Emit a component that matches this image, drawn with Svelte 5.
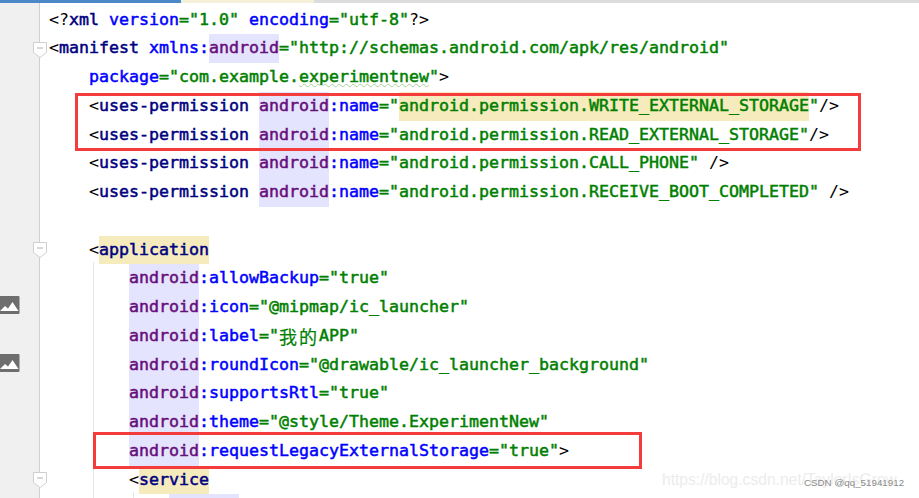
<script>
  const t = (c, s) => ({ c, s });
  const ns = t('ns hl', 'android');
  const perm = (name, tail) => [
    t('br', '<'), t('tag', 'uses-permission'), t('', ' '), ns, t('attr', ':name'), t('val', '='),
    ...name, t('br', tail)
  ];
  const attr = (name, value, tail = '') => [
    ns, t('attr', ':' + name), t('val', '="' + value + '"'), t('br', tail)
  ];

  const lines = [
    { indent: 0, tokens: [t('br', '<?'), t('tag', 'xml'), t('', ' '), t('attr', 'version'), t('val', '="1.0"'), t('', ' '), t('attr', 'encoding'), t('val', '="utf-8"'), t('br', '?>')] },
    { indent: 0, tokens: [t('br', '<'), t('tag', 'manifest'), t('', ' '), t('attr', 'xmlns:'), ns, t('val', '="http://schemas.android.com/apk/res/android"')] },
    { indent: 4, tokens: [t('attr', 'package'), t('val', '="com.example.'), t('val wavy', 'experimentnew'), t('val', '"'), t('br', '>')] },
    { indent: 4, tokens: perm([t('val', '"'), t('val hl2', 'android.permission.WRITE_EXTERNAL_STORAGE'), t('val', '"')], '/>') },
    { indent: 4, tokens: perm([t('val', '"android.permission.READ_EXTERNAL_STORAGE"')], '/>') },
    { indent: 4, tokens: perm([t('val', '"android.permission.CALL_PHONE"')], ' />') },
    { indent: 4, tokens: perm([t('val', '"android.permission.RECEIVE_BOOT_COMPLETED"')], ' />') },
    { indent: 0, tokens: [] },
    { indent: 4, tokens: [t('br', '<'), t('tag hl2', 'application')] },
    { indent: 8, tokens: attr('allowBackup', 'true') },
    { indent: 8, tokens: attr('icon', '@mipmap/ic_launcher') },
    { indent: 8, tokens: [ns, t('attr', ':label'), t('val', '="'), t('val cjk', '我'), t('val cjk', '的'), t('val', 'APP"')] },
    { indent: 8, tokens: attr('roundIcon', '@drawable/ic_launcher_background') },
    { indent: 8, tokens: attr('supportsRtl', 'true') },
    { indent: 8, tokens: attr('theme', '@style/Theme.ExperimentNew') },
    { indent: 8, tokens: attr('requestLegacyExternalStorage', 'true', '>') },
    { indent: 8, tokens: [t('br', '<'), t('tag hl2', 'service')] },
    { indent: 12, tokens: [ns] }
  ];
</script>

<div class="shot">
  <div class="tabs">
    <div class="tab-active"></div>
    <div class="tab-other"></div>
  </div>
  <div class="main">
    <div class="gutter">
      <svg class="fold f1" viewBox="0 0 14 16"><path d="M.5.5h13v10L7 15.5.5 10.500z" /><path class="dash" d="M4 6h6" /></svg>
      <svg class="fold f2" viewBox="0 0 14 16"><path d="M.5.5h13v10L7 15.5.5 10.500z" /><path class="dash" d="M4 6h6" /></svg>
      <svg class="fold f3" viewBox="0 0 14 16"><path d="M.5.5h13v10L7 15.5.5 10.500z" /><path class="dash" d="M4 6h6" /></svg>
      <svg class="thumb t1" viewBox="0 0 20 18"><path class="pic" d="M0 0h18.500q1 0 1 1v16q0 1-1 1H0z" /><path class="peak" d="M0 15l5-5 3 2.500L12.500 6l6 9z" /></svg>
      <svg class="thumb t2" viewBox="0 0 20 18"><path class="pic" d="M0 0h18.500q1 0 1 1v16q0 1-1 1H0z" /><path class="peak" d="M0 15l5-5 3 2.500L12.500 6l6 9z" /></svg>
    </div>
    <div class="code">
      {#each lines as line}
        <div class="line" style="padding-left: {line.indent * 10}px">
          {#each line.tokens as tok}<span class={tok.c}>{tok.s}</span>{/each}
        </div>
      {/each}
      <div class="guide g1"></div>
      <div class="guide g2"></div>
      <div class="redbox r1"></div>
      <div class="redbox r2"></div>
    </div>
  </div>
  <div class="mark">https://blog.csdn.net/TaylorIsGrow</div>
  <div class="csdn">CSDN @qq_51941912</div>
</div>

<style>
  :global(body) {
    margin: 0;
    background: #fff;
  }

  .shot {
    position: relative;
    width: 919px;
    height: 498px;
    overflow: hidden;
    background: #fff;
  }

  .tabs {
    display: flex;
    height: 3px;
    background: #dcdcdc;
  }

  .tab-active {
    width: 181px;
    background: #4a88c7;
  }

  .tab-other {
    width: 133px;
    background: #f5f0d8;
  }

  .main {
    display: flex;
    height: 495px;
  }

  .gutter {
    position: relative;
    flex: none;
    width: 39px;
    background: #f0f0f0;
    border-right: 1px solid #d0d0d0;
  }

  .fold {
    position: absolute;
    left: 33px;
    width: 14px;
    height: 16px;
  }

  .fold path {
    fill: #fff;
    stroke: #cfcfcf;
  }

  .fold .dash {
    stroke: #b0b0b0;
  }

  .f1 { top: 39px; }
  .f2 { top: 239px; }
  .f3 { top: 469px; }

  .thumb {
    position: absolute;
    left: 0;
    width: 20px;
    height: 18px;
  }

  .pic { fill: #6e6e6e; }
  .peak { fill: #fff; }
  .t1 { top: 293px; }
  .t2 { top: 351px; }

  .code {
    position: relative;
    flex: 1;
    padding-left: 9px;
    padding-top: 2.6px;
    font-family: "DejaVu Sans Mono", monospace;
    font-size: 16.61px;
    -webkit-text-stroke: 0.5px;
    white-space: pre;
  }

  .line {
    display: flex;
    height: 28.75px;
    line-height: 28.75px;
  }

  .br { color: #000; -webkit-text-stroke: 0; }
  .tag { color: #000080; }
  .attr { color: #0000ff; }
  .ns { color: #660e7a; }
  .val { color: #008000; }
  .hl { background: #e4e4ff; }
  .hl2 { background: #f5ebbc; }

  .wavy {
    text-decoration: underline wavy #a9cf9a 1px;
  }

  .cjk {
    width: 20px;
    font-family: "Noto Sans CJK SC", sans-serif;
    font-size: 18px;
    -webkit-text-stroke: 0.2px;
  }

  .guide {
    position: absolute;
    width: 1px;
    background: #e6e6e6;
  }

  .g1 {
    left: 53px;
    top: 259px;
    height: 236px;
  }

  .g2 {
    left: 93px;
    top: 489px;
    height: 6px;
  }

  .redbox {
    position: absolute;
    box-sizing: border-box;
    border: 3px solid #f53c3c;
  }

  .r1 {
    left: 35px;
    top: 90px;
    width: 786px;
    height: 58px;
  }

  .r2 {
    left: 53px;
    top: 429px;
    width: 549px;
    height: 37px;
  }

  .mark {
    position: absolute;
    left: 662px;
    top: 471px;
    font-family: "Liberation Sans", sans-serif;
    font-size: 15.6px;
    color: #ececec;
  }

  .csdn {
    position: absolute;
    left: 804px;
    top: 477px;
    font-family: "Liberation Sans", sans-serif;
    font-size: 9.7px;
    letter-spacing: 0.05px;
    color: #8a8a8a;
  }
</style>
